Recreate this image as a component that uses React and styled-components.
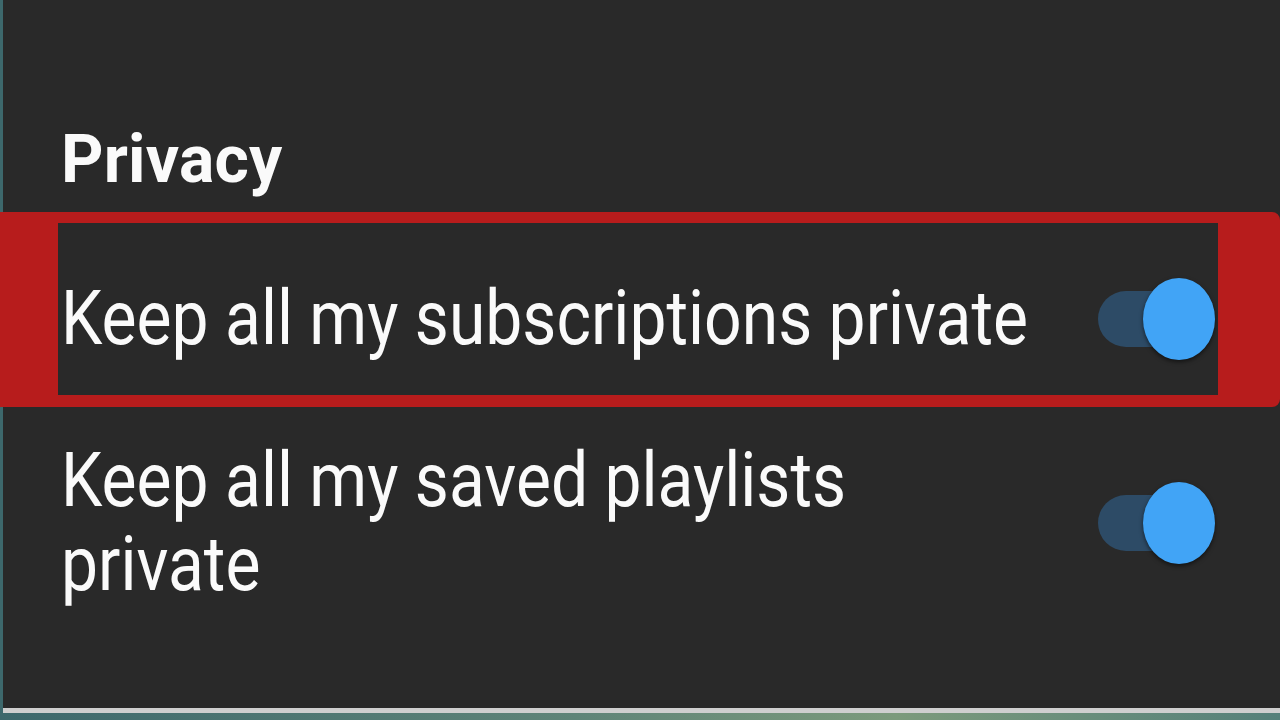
import styled, { createGlobalStyle } from 'styled-components';

const GlobalStyle = createGlobalStyle`
  html, body {
    margin: 0;
    padding: 0;
    background: #3f6b6e;
  }
  body {
    font-family: 'Roboto', 'Noto Sans', sans-serif;
  }
`;

const Screen = styled.div`
  width: 1280px;
  height: 720px;
  overflow: hidden;
  background: linear-gradient(90deg, #3d686c 0%, #5f8478 45%, #7c9a7c 70%, #55807a 100%);
`;

const Panel = styled.div`
  margin-left: 3px;
  height: 713px;
  box-sizing: border-box;
  padding-top: 120px;
  background: #292929;
  border-bottom: 5px solid #cfcfcf;
`;

const SectionTitle = styled.h2`
  margin: 0 0 12px;
  padding-left: 58px;
  font-size: 66px;
  line-height: 80px;
  font-weight: 700;
  color: #fafafa;
  letter-spacing: 0.2px;
`;

const Highlight = styled.div`
  margin-left: -3px;
  width: 1280px;
  box-sizing: border-box;
  border-style: solid;
  border-color: #b71c1c;
  border-width: 11px 62px 12px 58px;
  border-radius: 0 8px 8px 0;
`;

const Row = styled.div`
  display: flex;
  align-items: center;
  justify-content: space-between;
  gap: 40px;
  padding: ${(p) => p.$pad};
`;

const Label = styled.span`
  flex: 1;
  max-width: 1000px;
  font-size: 66px;
  line-height: 73.5px;
  color: #fafafa;
  transform: scaleY(1.14);
  transform-origin: center;
`;

const Switch = styled.div`
  position: relative;
  flex: none;
  width: 117px;
  height: 82px;
`;

const Track = styled.div`
  position: absolute;
  left: 0;
  top: 13px;
  width: 96px;
  height: 56px;
  border-radius: 28px;
  background: ${(p) => (p.$on ? '#2d4b66' : '#5a5a5a')};
`;

const Thumb = styled.div`
  position: absolute;
  top: 0;
  ${(p) => (p.$on ? 'right: 0;' : 'left: 0;')}
  width: 72px;
  height: 82px;
  border-radius: 50%;
  background: ${(p) => (p.$on ? '#41a4f6' : '#ececec')};
  box-shadow: 0 2px 4px rgba(0, 0, 0, 0.55);
`;

const Toggle = ({ on }) => (
  <Switch>
    <Track $on={on} />
    <Thumb $on={on} />
  </Switch>
);

export default function App() {
  return (
    <Screen>
      <GlobalStyle />
      <Panel>
        <SectionTitle>Privacy</SectionTitle>
        <Highlight>
          <Row $pad="55px 3px 35px 3px">
            <Label>Keep all my subscriptions private</Label>
            <Toggle on />
          </Row>
        </Highlight>
        <Row $pad="42px 65px 0 58px">
          <Label>Keep all my saved playlists private</Label>
          <Toggle on />
        </Row>
      </Panel>
    </Screen>
  );
}
